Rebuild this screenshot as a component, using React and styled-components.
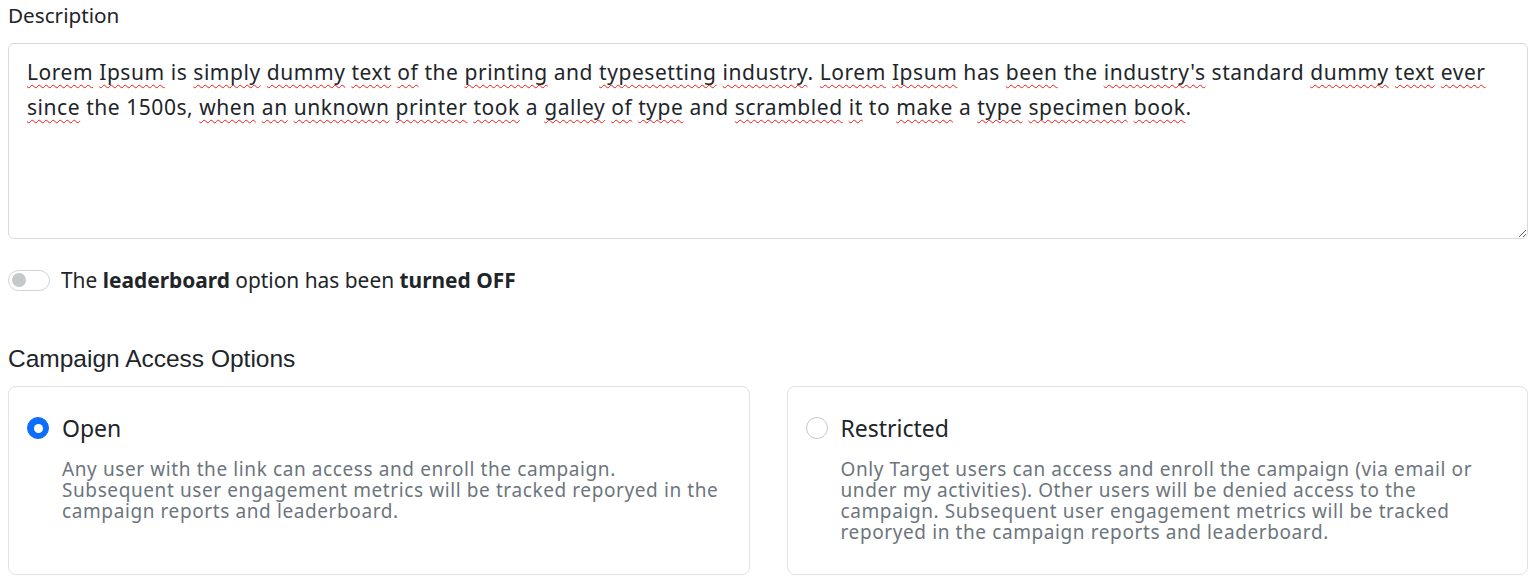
import React from "react";
import styled, { createGlobalStyle } from "styled-components";

const GlobalStyle = createGlobalStyle`
  html, body { margin: 0; padding: 0; background: #ffffff; }
  body { font-family: "Noto Sans", "Open Sans", sans-serif; color: #212529; }
`;

const Page = styled.div`
  padding: 0 8px 0 8px;
  display: flex;
  flex-direction: column;
`;

const FieldLabel = styled.label`
  font-size: 20.7px;
  line-height: 30px;
  color: #212529;
  margin-bottom: 13px;
`;

const TextArea = styled.div`
  box-sizing: border-box;
  height: 196px;
  border: 1px solid #d6dadf;
  border-radius: 6px;
  padding: 11px 18px;
  font-size: 21px;
  letter-spacing: 0.55px;
  line-height: 35px;
  color: #212529;
  resize: vertical;
  overflow: auto;
`;

const Miss = styled.span`
  text-decoration: underline wavy #f01e1e;
  text-decoration-thickness: 1.3px;
  text-underline-offset: 4px;
  text-decoration-skip-ink: none;
`;

const SwitchRow = styled.div`
  display: flex;
  align-items: center;
  gap: 11px;
  margin-top: 26px;
  height: 30px;
  font-size: 20.9px;
`;

const SwitchTrack = styled.span`
  box-sizing: border-box;
  width: 42px;
  height: 21px;
  border: 1px solid #cfd3d7;
  border-radius: 11px;
  display: flex;
  align-items: center;
  padding-left: 3px;
  flex-shrink: 0;
`;

const SwitchKnob = styled.span`
  width: 14px;
  height: 14px;
  border-radius: 50%;
  background: #c6c8ca;
`;

const Heading = styled.h3`
  margin: 49px 0 12px 0;
  font-family: "Liberation Sans", Arial, sans-serif;
  font-weight: 400;
  font-size: 24.5px;
  line-height: 30px;
  color: #212529;
`;

const CardGrid = styled.div`
  display: grid;
  grid-template-columns: 1fr 1fr;
  column-gap: 37px;
`;

const Card = styled.div`
  box-sizing: border-box;
  height: 189px;
  border: 1px solid #dfe2e6;
  border-radius: 8px;
  padding: 25px 18px 0 18px;
`;

const OptionRow = styled.div`
  display: flex;
  align-items: center;
  gap: 13px;
  height: 32px;
`;

const Radio = styled.span`
  box-sizing: border-box;
  width: 22px;
  height: 22px;
  border-radius: 50%;
  flex-shrink: 0;
  background: ${(p) => (p.$checked ? "#0d6efd" : "#ffffff")};
  border: 1px solid ${(p) => (p.$checked ? "#0d6efd" : "#c4c8cc")};
  display: flex;
  align-items: center;
  justify-content: center;
  &::after {
    content: "";
    display: ${(p) => (p.$checked ? "block" : "none")};
    width: 9px;
    height: 9px;
    border-radius: 50%;
    background: #ffffff;
  }
`;

const OptionLabel = styled.span`
  font-size: 23px;
  line-height: 32px;
  color: #212529;
`;

const OptionText = styled.p`
  margin: 15px 0 0 35px;
  font-size: 19px;
  line-height: 21px;
  color: #6c757d;
  letter-spacing: 0.6px;
`;

const W = ({ children }) => <Miss>{children}</Miss>;

export default function App() {
  return (
    <>
      <GlobalStyle />
      <Page>
        <FieldLabel>Description</FieldLabel>
        <TextArea>
          <W>Lorem</W> <W>Ipsum</W> is <W>simply</W> <W>dummy</W> <W>text</W> <W>of</W> the{" "}
          <W>printing</W> and <W>typesetting</W> <W>industry</W>. <W>Lorem</W> <W>Ipsum</W> has{" "}
          <W>been</W> the <W>industry's</W> standard <W>dummy</W> <W>text</W> <W>ever</W>{" "}
          <W>since</W> the 1500s, <W>when</W> <W>an</W> <W>unknown</W> <W>printer</W> <W>took</W> a{" "}
          <W>galley</W> <W>of</W> <W>type</W> and <W>scrambled</W> <W>it</W> to <W>make</W> a{" "}
          <W>type</W> <W>specimen</W> <W>book</W>.
        </TextArea>
        <SwitchRow>
          <SwitchTrack>
            <SwitchKnob />
          </SwitchTrack>
          <span>
            The <b>leaderboard</b> option has been <b>turned OFF</b>
          </span>
        </SwitchRow>
        <Heading>Campaign Access Options</Heading>
        <CardGrid>
          <Card>
            <OptionRow>
              <Radio $checked />
              <OptionLabel>Open</OptionLabel>
            </OptionRow>
            <OptionText>
              Any user with the link can access and enroll the campaign.
              <br />
              Subsequent user engagement metrics will be tracked reporyed in the
              <br />
              campaign reports and leaderboard.
            </OptionText>
          </Card>
          <Card>
            <OptionRow>
              <Radio />
              <OptionLabel>Restricted</OptionLabel>
            </OptionRow>
            <OptionText>
              Only Target users can access and enroll the campaign (via email or
              <br />
              under my activities). Other users will be denied access to the
              <br />
              campaign. Subsequent user engagement metrics will be tracked
              <br />
              reporyed in the campaign reports and leaderboard.
            </OptionText>
          </Card>
        </CardGrid>
      </Page>
    </>
  );
}
